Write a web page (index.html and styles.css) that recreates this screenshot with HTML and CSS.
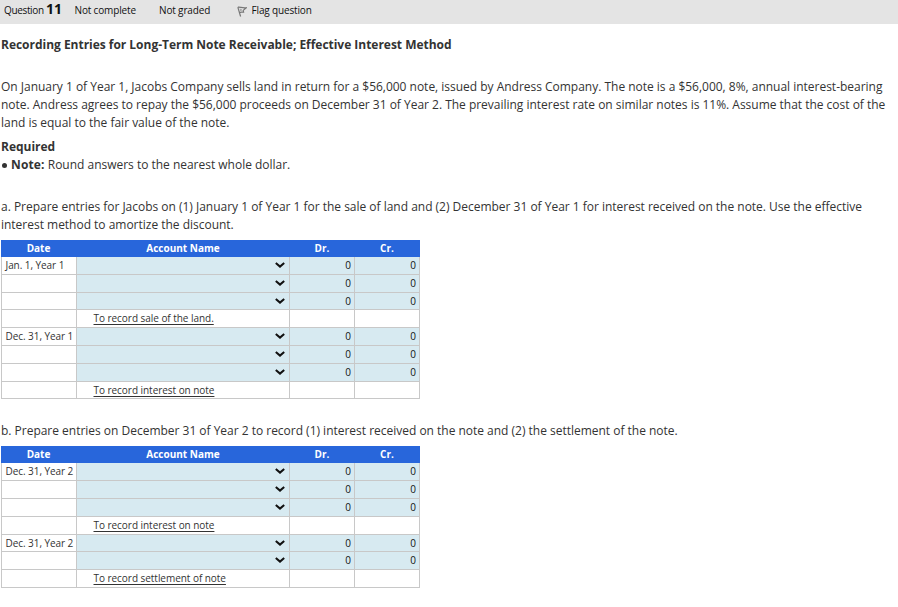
FILE: index.html
```
<!DOCTYPE html>
<html lang="en">
<head>
<meta charset="utf-8">
<title>Question 11</title>
<link rel="stylesheet" href="styles.css">
</head>
<body>
<header class="bar">
  <span class="q">Question</span><b class="num">11</b><span class="state">Not complete</span><span class="grade">Not graded</span>
  <svg class="flag" width="10" height="11" viewBox="0 0 10 11"><path d="M.8 1.2L3.6 10.5M1 1.2C3 .7 5 2.4 9.4 1.8L6.2 4.4L6.6 6.2C5.2 6.4 4 5.8 2.4 6.6" fill="none" stroke="#777" stroke-width="1.2"/><path d="M2.5 2.5L5 3.2L4.6 5L3.2 5Z" fill="#aaa"/></svg>
  <span class="flagtext">Flag question</span>
</header>
<main>
  <h1>Recording Entries for Long-Term Note Receivable; Effective Interest Method</h1>
  <p class="intro">On January 1 of Year 1, Jacobs Company sells land in return for a $56,000 note, issued by Andress Company. The note is a $56,000, 8%, annual interest-bearing<br>note. Andress agrees to repay the $56,000 proceeds on December 31 of Year 2. The prevailing interest rate on similar notes is 11%. Assume that the cost of the<br>land is equal to the fair value of the note.</p>
  <p class="req"><b>Required</b><br><span class="dot"></span><b>Note:</b> Round answers to the nearest whole dollar.</p>
  <p class="parta">a. Prepare entries for Jacobs on (1) January 1 of Year 1 for the sale of land and (2) December 31 of Year 1 for interest received on the note. Use the effective<br>interest method to amortize the discount.</p>
  <div class="table" id="a"></div>
  <p class="partb">b. Prepare entries on December 31 of Year 2 to record (1) interest received on the note and (2) the settlement of the note.</p>
  <div class="table" id="b"></div>
</main>
<script src="script.js"></script>
</body>
</html>
```
FILE: styles.css
```
body { margin: 0; background: #fff; color: #333; font: 12px/18px "Open Sans", sans-serif; white-space: nowrap; overflow: hidden; }
.bar { height: 24px; background: #e4e4e4; color: #111; display: flex; font-size: 10px; line-height: 20px; padding-left: 4px; box-sizing: border-box; }
.q { width: 42px; letter-spacing: -.35px; }
.num { width: 28.5px; font-size: 14px; line-height: 17px; }
.state { width: 84.5px; letter-spacing: -.15px; }
.grade { width: 78px; letter-spacing: -.15px; }
.flag { margin-top: 6px; width: 10px; height: 11px; }
.flagtext { margin-left: 4.5px; letter-spacing: -.15px; }
main { padding-left: 1px; }
h1 { margin: 12px 0 0; font-size: 12px; line-height: 18px; letter-spacing: -.022px; }
p { margin: 0; letter-spacing: -.014px; }
.intro { margin-top: 24px; }
.req { margin-top: 6px; }
.dot { display: inline-block; width: 5px; height: 5px; margin: 0 4px 1px 1px; border-radius: 50%; background: #333; }
.req .dot + b { letter-spacing: .15px; }
.parta { margin-top: 24px; height: 42px; }
.partb { margin-top: 23px; height: 24px; }
.table { width: 419px; font-size: 10px; }
.head, .row { display: grid; grid-template-columns: 76px 213px 65px 65px; }
.head { height: 17px; background: #2866db; color: #fff; font-weight: bold; line-height: 17px; text-align: center; }
.head > div { position: relative; left: -.5px; }
.row { height: 18px; grid-template-rows: 18px; line-height: 17px; }
.row.short { height: 17px; grid-template-rows: 17px; }
.row > div { border-right: 1px solid #c8c8c8; border-bottom: 1px solid #c8c8c8; box-sizing: border-box; }
.row > .date { border-left: 1px solid #c8c8c8; padding-left: 3.5px; letter-spacing: -.06px; }
.fill { background: #d7eaf1; }
.acct.fill { display: flex; justify-content: flex-end; }
.chev { width: 10px; height: 6px; margin: 5px 4px 0 0; }
.chev path { fill: none; stroke: #111; stroke-width: 2; }
.note { padding-left: 16.5px; text-decoration: underline; text-underline-offset: 2px; letter-spacing: -.04px; }
.amt { text-align: right; padding-right: 3px; color: #111; }
```
FILE: script.js
```
const tables = {
  a: [["Jan. 1, Year 1"], [""], ["", null, 1], ["", "To record sale of the land."], ["Dec. 31, Year 1"], [""], [""], ["", "To record interest on note", 1]],
  b: [["Dec. 31, Year 2"], [""], [""], ["", "To record interest on note"], ["Dec. 31, Year 2", null, 1], [""], ["", "To record settlement of note"]]
};
const chevron = '<svg class="chev" viewBox="0 0 10 6"><path d="M.8 .9L5 4.6L9.2 .9"/></svg>';
for (const [id, rows] of Object.entries(tables)) {
  document.getElementById(id).innerHTML =
    '<div class="head"><div>Date</div><div>Account Name</div><div>Dr.</div><div>Cr.</div></div>' +
    rows.map(([date, note, short]) =>
      `<div class="row${short ? " short" : ""}"><div class="date">${date}</div>` +
      (note ? `<div class="note"><span>${note}</span></div><div></div><div></div>`
            : `<div class="acct fill">${chevron}</div><div class="amt fill">0</div><div class="amt fill">0</div>`) +
      "</div>").join("");
}
```
